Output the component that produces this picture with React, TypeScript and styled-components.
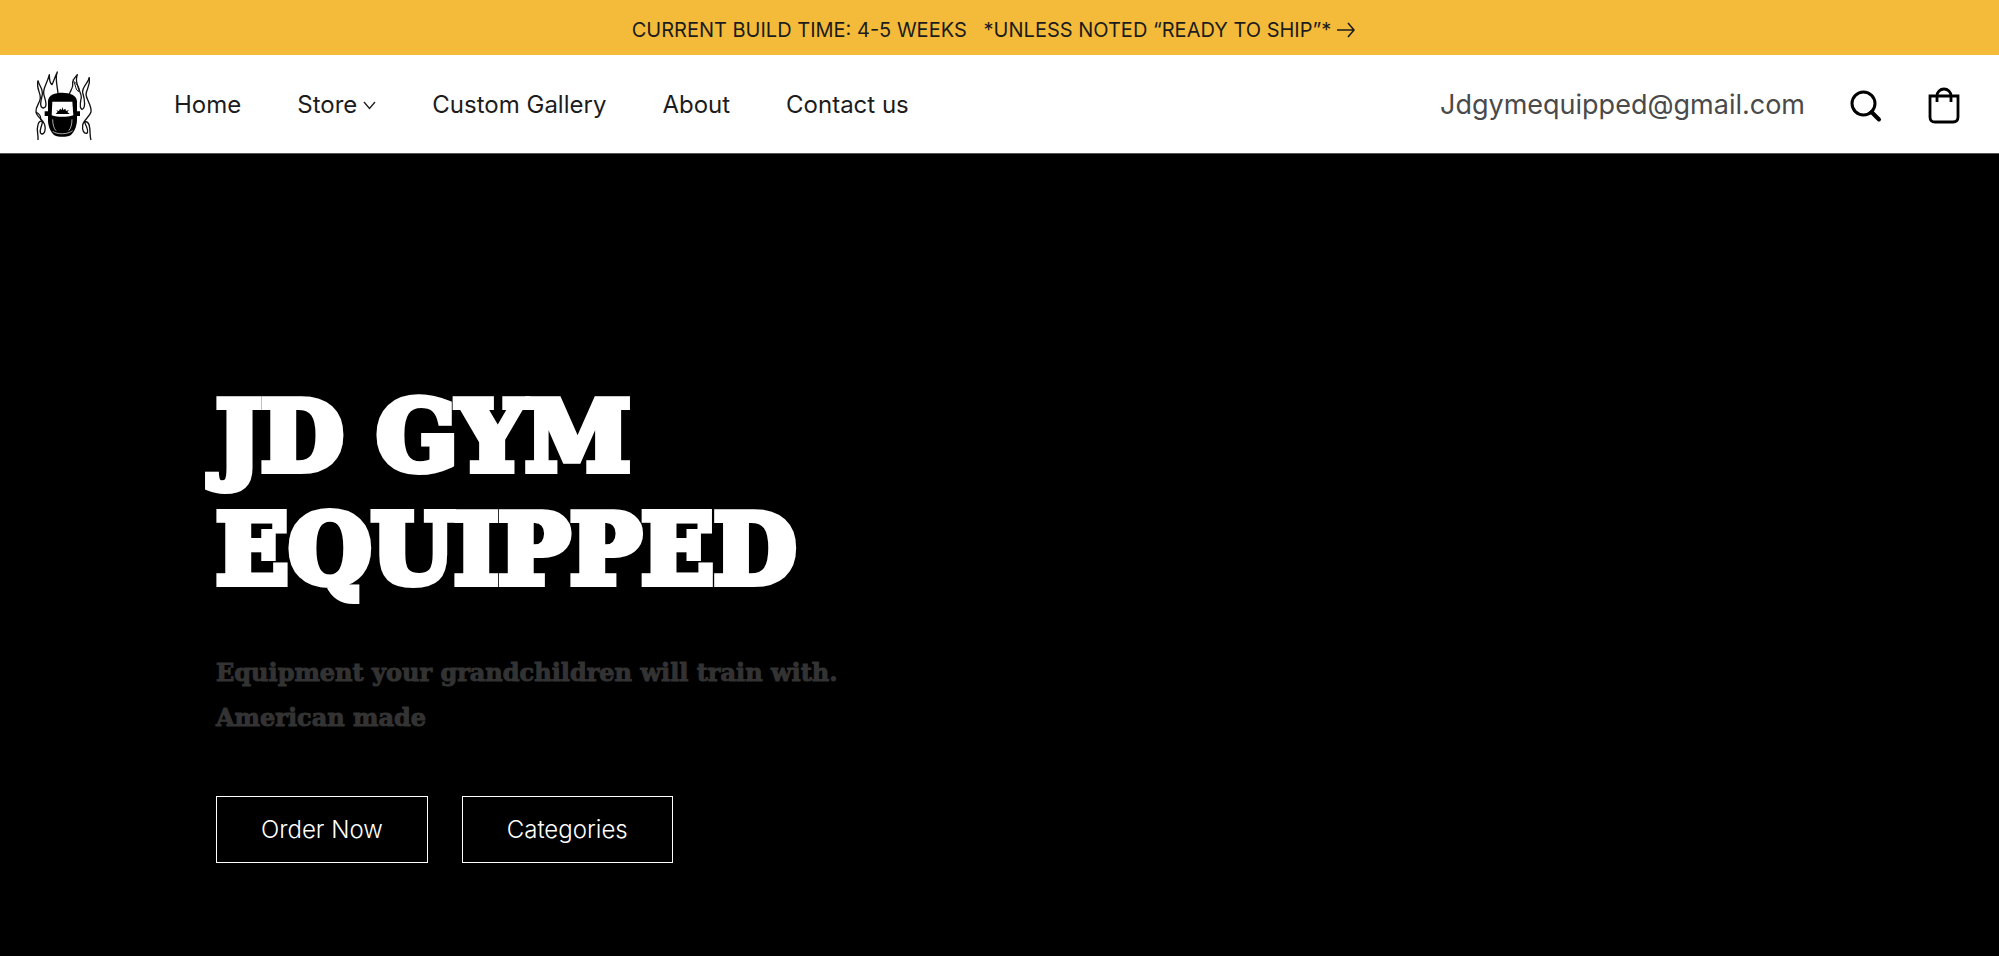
import React from 'react';
import styled, { createGlobalStyle } from 'styled-components';

const GlobalStyle = createGlobalStyle`
  *, *::before, *::after { box-sizing: border-box; }
  body { margin: 0; background: #000; font-family: Inter, "Open Sans", sans-serif; }
`;

const Page = styled.div`
  display: flex;
  flex-direction: column;
  min-height: 100vh;
`;

const Announcement = styled.a`
  display: flex;
  align-items: center;
  justify-content: center;
  gap: 6px;
  min-height: 55px;
  padding: 4px 24px 0 12px;
  background: #f4bb3a;
  color: #1c1c1c;
  font-size: 20px;
  font-weight: 400;
  line-height: 24px;
  text-decoration: none;
  white-space: pre-wrap;
`;

const Header = styled.header`
  display: flex;
  align-items: center;
  min-height: 99px;
  padding: 2px 34px 0 20px;
  background: #fff;
  border-bottom: 1px solid #555;
`;

const LogoLink = styled.a`
  display: block;
  flex: none;
  margin-right: 64px;
  svg { display: block; }
`;

const Nav = styled.nav`
  display: flex;
  gap: 56px;
`;

const NavLink = styled.a`
  display: flex;
  align-items: center;
  gap: 6px;
  color: #1c1c1c;
  font-size: 24px;
  line-height: 32px;
  text-decoration: none;
`;

const Tools = styled.div`
  display: flex;
  align-items: center;
  gap: 36px;
  margin-left: auto;
`;

const Email = styled.a`
  margin-right: 4px;
  color: #4a4a4a;
  font-size: 27px;
  font-weight: 400;
  line-height: 32px;
  text-decoration: none;
`;

const IconButton = styled.button`
  display: flex;
  width: 42px;
  padding: 0;
  justify-content: center;
  border: 0;
  background: none;
  color: #000;
  cursor: pointer;
`;

const Hero = styled.main`
  flex: 1;
  display: flex;
  flex-direction: column;
  align-items: flex-start;
  padding: 226px 216px 92px;
  background: #000;
`;

const Title = styled.h1`
  margin: 0;
  color: #fff;
  font-family: "DejaVu Serif", serif;
  font-size: 95px;
  font-weight: 700;
  line-height: 113px;
  -webkit-text-stroke: 8px #fff;
`;

const Tagline = styled.p`
  margin: 44px 0 0;
  color: #333;
  font-family: "DejaVu Serif", serif;
  font-size: 24px;
  font-weight: 700;
  line-height: 45px;
  -webkit-text-stroke: 1px #333;
`;

const Actions = styled.div`
  display: flex;
  flex-wrap: wrap;
  gap: 34px;
  margin-top: 56px;
`;

const ActionButton = styled.button`
  min-height: 67px;
  padding: 0 44px;
  border: 1px solid #fff;
  background: #000;
  color: #fff;
  font: 300 24px/32px Inter, "Open Sans", sans-serif;
  cursor: pointer;
`;

const Logo = () => (
  <svg width="90" height="90" viewBox="0 0 270 270" fill="none" stroke="#111" strokeWidth="4" strokeLinejoin="round">
    <path d="M54 62C48 88 62 96 61 114C60 130 46 138 48 156C50 172 70 178 74 194C78 208 74 222 66 222C56 220 62 204 66 192C70 180 58 180 54 194C48 212 56 222 54 240" />
    <path d="M54 62C58 80 72 88 66 108C62 124 58 142 70 144C84 142 76 120 72 106C66 86 80 76 88 44C88 56 90 70 96 74C100 66 104 52 112 36C104 54 112 76 114 100" />
    <path d="M48 156C56 160 64 166 62 180" />
    <path d="M208 52C212 80 198 88 198 104C200 120 216 138 213 156C208 172 190 180 188 196C186 210 192 222 200 220C206 216 202 204 196 192C190 180 206 184 208 198C212 214 208 224 213 240" />
    <path d="M208 52C204 72 186 78 188 98C196 122 196 146 186 148C176 144 182 124 184 112C184 98 176 92 172 74C168 62 168 54 172 44C164 54 156 60 158 72C160 80 154 88 148 102" />
    <path d="M158 60C168 70 182 82 176 95C166 90 168 78 162 66" strokeWidth="3" />
    <path d="M74 154h12v14h-12zM170 154h10v14h-10z" fill="#000" stroke="none" />
    <path d="M84 124C84 104 106 98 127 98C150 98 170 106 171 124L171 180C170 202 162 216 152 226C138 232 116 232 103 226C92 216 84 200 84 180Z" fill="#000" stroke="none" />
    <path d="M97 125H157L160 166C140 172 114 172 95 166Z" fill="#fff" stroke="none" />
    <path d="M107 162L113 155L109 151L117 153L120 146L125 150L127 141L130 150L136 146L138 153L147 150L142 156L149 162Z" fill="#000" stroke="none" />
    <path d="M98 178C98 194 102 206 108 212M156 178C156 194 152 206 146 212" stroke="#aaa" strokeWidth="3" />
    <path d="M98 214C112 224 142 224 158 212" stroke="#fff" strokeWidth="2" />
  </svg>
);

const App = () => (
  <>
    <GlobalStyle />
    <Page>
      <Announcement href="#build-time">
        <span>{'CURRENT BUILD TIME: 4-5 WEEKS \u00a0 *UNLESS NOTED “READY TO SHIP”*'}</span>
        <svg width="18" height="16" viewBox="0 0 18 16" fill="none" stroke="currentColor" strokeWidth="1.6" aria-hidden="true">
          <path d="M0 8H17M11 1L17 8L11 15" />
        </svg>
      </Announcement>
      <Header>
        <LogoLink href="#home" aria-label="JD Gym Equipped"><Logo /></LogoLink>
        <Nav aria-label="Main">
          <NavLink href="#home">Home</NavLink>
          <NavLink href="#store">
            Store
            <svg width="13" height="9" viewBox="0 0 13 9" fill="none" stroke="currentColor" strokeWidth="1.3" aria-hidden="true">
              <path d="M1 1L6.5 7.5L12 1" />
            </svg>
          </NavLink>
          <NavLink href="#gallery">Custom Gallery</NavLink>
          <NavLink href="#about">About</NavLink>
          <NavLink href="#contact">Contact us</NavLink>
        </Nav>
        <Tools>
          <Email href="mailto:Jdgymequipped@gmail.com">Jdgymequipped@gmail.com</Email>
          <IconButton aria-label="Search">
            <svg width="32" height="36" viewBox="0 0 32 36" fill="none" stroke="currentColor" strokeWidth="3">
              <circle cx="13.5" cy="16.5" r="11.5" />
              <path d="M21.5 25L29 32.5" strokeWidth="4" strokeLinecap="round" />
            </svg>
          </IconButton>
          <IconButton aria-label="Cart">
            <svg width="32" height="38" viewBox="0 0 32 38" fill="none" stroke="currentColor" strokeWidth="2.8">
              <path d="M2 10H30V31Q30 36 25 36H7Q2 36 2 31Z" />
              <path d="M9 16V10A7 7 0 0 1 23 10V16" />
            </svg>
          </IconButton>
        </Tools>
      </Header>
      <Hero>
        <Title>JD GYM<br />EQUIPPED</Title>
        <Tagline>Equipment your grandchildren will train with.<br />American made</Tagline>
        <Actions>
          <ActionButton>Order Now</ActionButton>
          <ActionButton>Categories</ActionButton>
        </Actions>
      </Hero>
    </Page>
  </>
);

export default App;
